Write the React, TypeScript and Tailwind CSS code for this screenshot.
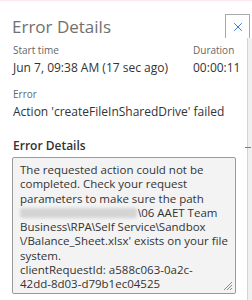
import { X } from "lucide-react";

const font = { fontFamily: '"Open Sans", "Noto Sans", sans-serif' };

function Bs() {
  return <span style={{ fontFamily: '"Liberation Sans", sans-serif' }}>\</span>;
}

export default function App() {
  return (
    <div
      className="relative h-[300px] w-[252px] overflow-hidden border-t border-[#fbe7ee] bg-white text-[#333]"
      style={font}
    >
      {/* scrollbar strip */}
      <div className="absolute right-0 top-[37px] bottom-0 w-[5px] border-l border-[#d4d4d4] bg-[#f0f0f0]">
        <div className="absolute left-[-3px] top-[109px] h-[1px] w-[6px] bg-[#e05050]" />
      </div>

      <div className="flex items-start justify-between pl-[12px] pr-[2px] pt-[13px]">
        <h1 className="pt-[1px] text-[17px] leading-[24px] text-[#707070]">Error Details</h1>
        <button
          type="button"
          aria-label="Close"
          className="flex h-[24px] w-[25px] items-center justify-center border border-b-0 border-[#a8a8a8] bg-white text-[#1f72e0]"
        >
          <X className="h-[14px] w-[14px]" strokeWidth={1.6} />
        </button>
      </div>

      <div className="pl-[13px]">
        <div className="mt-[4px] flex">
          <div className="w-[180px]">
            <div className="text-[10px] leading-[14px] text-[#666]">Start time</div>
            <div className="mt-[3px] text-[12px] leading-[16px]">Jun 7, 09:38 AM (17 sec ago)</div>
          </div>
          <div>
            <div className="text-[10px] leading-[14px] text-[#666]">Duration</div>
            <div className="mt-[3px] text-[12px] leading-[16px]">00:00:11</div>
          </div>
        </div>

        <div className="mt-[11px] text-[10px] leading-[14px] text-[#666]">Error</div>
        <div className="mt-[3px] text-[12px] leading-[16px]">Action 'createFileInSharedDrive' failed</div>

        <div className="mt-[18px] text-[12px] font-semibold leading-[16px]">Error Details</div>
        <div className="relative -ml-[1px] mt-[3px] h-[137px] w-[224px] rounded-[2px] border border-[#9a9a9a] bg-[#f3f3f3] pl-[7px] pt-[5px] text-[11.5px] leading-[14.25px] text-[#333] whitespace-nowrap">
          <div>The requested action could not be</div>
          <div>completed. Check your request</div>
          <div>parameters to make sure the path</div>
          <div className="flex items-center">
            <span className="mr-[1px] inline-block h-[10px] w-[117px] rounded-[3px] bg-[#d4d4d4] blur-[1.5px]" />
            <span>
              <Bs />
              06 AAET Team
            </span>
          </div>
          <div>
            Business<Bs />RPA<Bs />Self Service<Bs />Sandbox
          </div>
          <div>
            <Bs />/Balance_Sheet.xlsx' exists on your file
          </div>
          <div>system.</div>
          <div>clientRequestId: a588c063-0a2c-</div>
          <div>42dd-8d03-d79b1ec04525</div>
          <svg className="absolute bottom-[2px] right-[2px]" width="10" height="10" viewBox="0 0 10 10">
            <path d="M9 1L1 9M9 4L4 9M9 7L7 9" stroke="#8a8a8a" strokeWidth="1" />
          </svg>
        </div>
      </div>
    </div>
  );
}
